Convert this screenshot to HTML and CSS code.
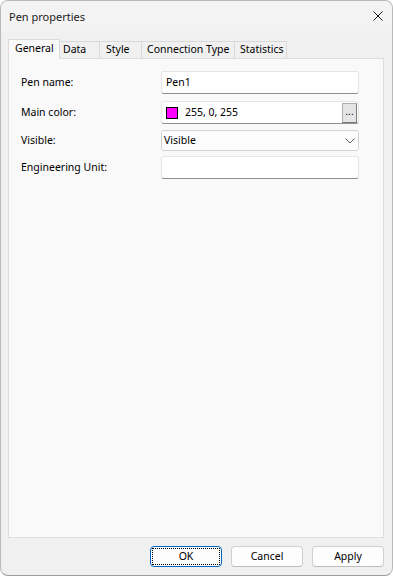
FILE: index.html
```html
<!DOCTYPE html>
<html>
<head>
<meta charset="utf-8">
<link rel="stylesheet" href="styles.css">
</head>
<body>
<div class="window">
  <div class="titlebar">
    <span class="title">Pen properties</span>
    <span class="close"><svg width="10" height="10" viewBox="0 0 10 10"><path d="M0.5 0.5L9.5 9.5M9.5 0.5L0.5 9.5" stroke="#1a1a1a" stroke-width="1"/></svg></span>
  </div>
  <div class="body">
    <div class="tabs">
      <div class="tab active t-general">General</div>
      <div class="tab t-data">Data</div>
      <div class="tab t-style">Style</div>
      <div class="tab t-conn">Connection Type</div>
      <div class="tab t-stats">Statistics</div>
    </div>
    <div class="panel">
      <div class="row r1">
        <span class="lbl">Pen name:</span>
        <div class="field"><span class="val">Pen1</span></div>
      </div>
      <div class="row r2">
        <span class="lbl">Main color:</span>
        <div class="field color">
          <span class="swatch"></span>
          <span class="val">255, 0, 255</span>
          <span class="ellipsis">...</span>
        </div>
      </div>
      <div class="row r3">
        <span class="lbl">Visible:</span>
        <div class="select">
          <span class="sval">Visible</span>
          <svg class="chev" width="10" height="6" viewBox="0 0 10 6"><path d="M0.5 0.5L5 5L9.5 0.5" fill="none" stroke="#5f5f5f" stroke-width="1"/></svg>
        </div>
      </div>
      <div class="row r4">
        <span class="lbl">Engineering Unit:</span>
        <div class="field"></div>
      </div>
    </div>
    <div class="buttons">
      <div class="btn default"><span class="focus">OK</span></div>
      <div class="btn"><span>Cancel</span></div>
      <div class="btn"><span>Apply</span></div>
    </div>
  </div>
</div>
</body>
</html>
```

FILE: styles.css
```css
html, body {
  margin: 0;
  padding: 0;
  background: #ffffff;
}
body {
  font-family: "Noto Sans", "Liberation Sans", sans-serif;
  font-size: 10.5px;
  color: #000;
}
.window {
  width: 393px;
  height: 576px;
  box-sizing: border-box;
  border: 1px solid #b9b9b9;
  border-bottom-color: #9c9c9c;
  border-radius: 8px;
  background: #f0f0f0;
  display: flex;
  flex-direction: column;
  overflow: hidden;
}
.titlebar {
  height: 30px;
  flex: none;
  background: #f3f3f3;
  display: flex;
  align-items: center;
  justify-content: space-between;
  padding: 0 9px 0 8px;
}
.title {
  font-size: 11px;
  color: #1a1a1a;
  margin-top: 1px;
}
.close {
  display: flex;
  width: 10px;
  height: 10px;
  margin-top: -1px;
}
.body {
  flex: 1;
  display: flex;
  flex-direction: column;
  padding: 8px 8px 0 7px;
}
.tabs {
  display: flex;
  height: 19px;
  align-items: flex-start;
}
.tab {
  box-sizing: border-box;
  height: 17px;
  margin-top: 2px;
  border-top: 1px solid #dadada;
  border-right: 1px solid #dadada;
  background: #f0f0f0;
  line-height: 15px;
  white-space: nowrap;
  overflow: hidden;
}
.tab.active {
  height: 20px;
  margin-top: 0;
  border-left: 1px solid #dadada;
  background: #f9f9f9;
  position: relative;
  z-index: 1;
  line-height: 16px;
}
.t-general { width: 52px; padding-left: 6px; }
.t-data { width: 40px; padding-left: 3px; }
.t-style { width: 42px; padding-left: 6px; }
.t-conn { width: 93px; padding-left: 5px; }
.t-stats { width: 52px; padding-left: 5px; }
.panel {
  box-sizing: border-box;
  width: 376px;
  height: 480px;
  background: #f9f9f9;
  border: 1px solid #dedede;
  padding: 12px 0 0 12px;
  display: flex;
  flex-direction: column;
}
.row {
  display: flex;
  align-items: center;
  height: 23px;
}
.r2 { margin-top: 7px; }
.r3 { margin-top: 6px; height: 21px; }
.r4 { margin-top: 5px; }
.lbl {
  width: 140px;
  flex: none;
  margin-top: -1px;
}
.field {
  box-sizing: border-box;
  width: 198px;
  height: 23px;
  background: #ffffff;
  border: 1px solid #e5e5e5;
  border-bottom-color: #8f8f8f;
  border-radius: 3px;
  display: flex;
  align-items: center;
  padding-left: 4px;
}
.val { margin-top: -1px; }
.color { padding-left: 4px; padding-right: 1px; }
.swatch {
  width: 12px;
  height: 12px;
  box-sizing: border-box;
  background: #ff00ff;
  border: 1px solid #000;
  margin-right: 7px;
  flex: none;
}
.color .val { flex: 1; }
.ellipsis {
  box-sizing: border-box;
  width: 15px;
  height: 20px;
  background: #e4e4e4;
  border: 1px solid #adadad;
  border-right-color: #7a7a7a;
  border-bottom-color: #7a7a7a;
  font-size: 10px;
  line-height: 15px;
  text-align: center;
  letter-spacing: 0;
  font-family: "Liberation Sans", sans-serif;
  overflow: hidden;
}
.select {
  box-sizing: border-box;
  width: 198px;
  height: 21px;
  background: #fdfdfd;
  border: 1px solid #d3d3d3;
  border-radius: 3px;
  display: flex;
  align-items: center;
  justify-content: space-between;
  padding: 0 3px 0 2px;
}
.sval { margin-top: -1px; }
.chev { margin-top: 1px; }
.buttons {
  display: flex;
  justify-content: flex-end;
  gap: 9px;
  margin-top: 8px;
  padding-right: 0;
}
.btn {
  box-sizing: border-box;
  width: 72px;
  height: 21px;
  background: #fdfdfd;
  border: 1px solid #d0d0d0;
  border-bottom-color: #bcbcbc;
  border-radius: 4px;
  display: flex;
  align-items: center;
  justify-content: center;
}
.btn span { margin-top: -1px; }
.btn.default {
  border: 1px solid #0067c0;
  padding: 1px;
}
.btn.default .focus {
  box-sizing: border-box;
  width: 100%;
  height: 100%;
  margin-top: 0;
  border: 1px dotted #000;
  display: flex;
  align-items: center;
  justify-content: center;
  line-height: 1;
}
```
